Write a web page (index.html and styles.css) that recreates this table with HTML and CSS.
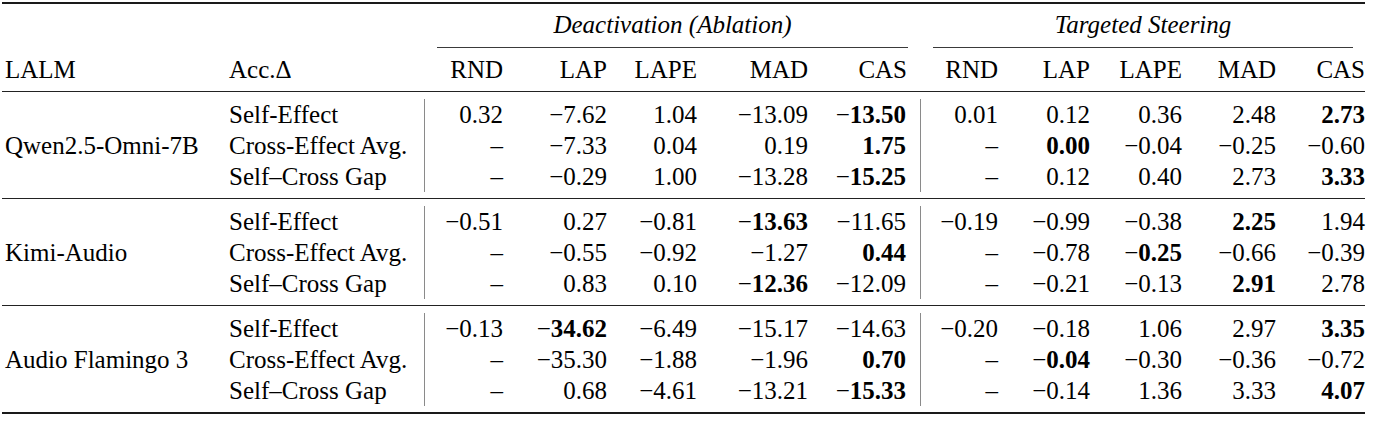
FILE: index.html
```html
<!DOCTYPE html>
<html lang="en">
<head>
<meta charset="utf-8">
<title>Results table</title>
<link rel="stylesheet" href="styles.css">
</head>
<body>
<div class="frame">
<table class="results">
  <colgroup>
    <col class="w-model"><col class="w-acc">
    <col class="w-a1"><col class="w-a2"><col class="w-a3"><col class="w-a4"><col class="w-a5">
    <col class="w-b1"><col class="w-b2"><col class="w-b3"><col class="w-b4"><col class="w-b5">
  </colgroup>
  <thead>
    <tr class="head-groups">
      <th colspan="2"></th>
      <th colspan="5"><div class="span-title span-left">Deactivation (Ablation)</div></th>
      <th colspan="5"><div class="span-title span-right">Targeted Steering</div></th>
    </tr>
    <tr class="head-cols">
      <th class="model">LALM</th>
      <th class="acc">Acc.Δ</th>
      <th>RND</th><th>LAP</th><th>LAPE</th><th>MAD</th><th class="endblock">CAS</th>
      <th>RND</th><th>LAP</th><th>LAPE</th><th>MAD</th><th>CAS</th>
    </tr>
  </thead>
  <tbody>
    <tr class="pad-top"><td colspan="12"></td></tr>
    <tr>
      <td class="model" rowspan="3">Qwen2.5-Omni-7B</td>
      <td class="acc">Self-Effect</td>
      <td>0.32</td><td>−7.62</td><td>1.04</td><td>−13.09</td><td class="endblock">−<b>13.50</b></td>
      <td>0.01</td><td>0.12</td><td>0.36</td><td>2.48</td><td><b>2.73</b></td>
    </tr>
    <tr>
      <td class="acc">Cross-Effect Avg.</td>
      <td>–</td><td>−7.33</td><td>0.04</td><td>0.19</td><td class="endblock"><b>1.75</b></td>
      <td>–</td><td><b>0.00</b></td><td>−0.04</td><td>−0.25</td><td>−0.60</td>
    </tr>
    <tr>
      <td class="acc">Self–Cross Gap</td>
      <td>–</td><td>−0.29</td><td>1.00</td><td>−13.28</td><td class="endblock">−<b>15.25</b></td>
      <td>–</td><td>0.12</td><td>0.40</td><td>2.73</td><td><b>3.33</b></td>
    </tr>
    <tr class="pad-bottom"><td colspan="12"></td></tr>
  </tbody>
  <tbody>
    <tr class="pad-top"><td colspan="12"></td></tr>
    <tr>
      <td class="model" rowspan="3">Kimi-Audio</td>
      <td class="acc">Self-Effect</td>
      <td>−0.51</td><td>0.27</td><td>−0.81</td><td>−<b>13.63</b></td><td class="endblock">−11.65</td>
      <td>−0.19</td><td>−0.99</td><td>−0.38</td><td><b>2.25</b></td><td>1.94</td>
    </tr>
    <tr>
      <td class="acc">Cross-Effect Avg.</td>
      <td>–</td><td>−0.55</td><td>−0.92</td><td>−1.27</td><td class="endblock"><b>0.44</b></td>
      <td>–</td><td>−0.78</td><td>−<b>0.25</b></td><td>−0.66</td><td>−0.39</td>
    </tr>
    <tr>
      <td class="acc">Self–Cross Gap</td>
      <td>–</td><td>0.83</td><td>0.10</td><td>−<b>12.36</b></td><td class="endblock">−12.09</td>
      <td>–</td><td>−0.21</td><td>−0.13</td><td><b>2.91</b></td><td>2.78</td>
    </tr>
    <tr class="pad-bottom"><td colspan="12"></td></tr>
  </tbody>
  <tbody>
    <tr class="pad-top"><td colspan="12"></td></tr>
    <tr>
      <td class="model" rowspan="3">Audio Flamingo 3</td>
      <td class="acc">Self-Effect</td>
      <td>−0.13</td><td>−<b>34.62</b></td><td>−6.49</td><td>−15.17</td><td class="endblock">−14.63</td>
      <td>−0.20</td><td>−0.18</td><td>1.06</td><td>2.97</td><td><b>3.35</b></td>
    </tr>
    <tr>
      <td class="acc">Cross-Effect Avg.</td>
      <td>–</td><td>−35.30</td><td>−1.88</td><td>−1.96</td><td class="endblock"><b>0.70</b></td>
      <td>–</td><td>−<b>0.04</b></td><td>−0.30</td><td>−0.36</td><td>−0.72</td>
    </tr>
    <tr>
      <td class="acc">Self–Cross Gap</td>
      <td>–</td><td>0.68</td><td>−4.61</td><td>−13.21</td><td class="endblock">−<b>15.33</b></td>
      <td>–</td><td>−0.14</td><td>1.36</td><td>3.33</td><td><b>4.07</b></td>
    </tr>
    <tr class="pad-bottom"><td colspan="12"></td></tr>
  </tbody>
</table>
</div>
</body>
</html>
```

FILE: styles.css
```css
html, body {
  margin: 0;
  padding: 0;
  background: #ffffff;
}

body {
  font-family: "Liberation Serif", "Times New Roman", Tinos, "DejaVu Serif", serif;
  font-size: 25px;
  color: #000000;
}

.frame {
  width: 1363px;
  margin: 2px 0 0 2px;
  border-top: 2px solid #1a1a1a;
  border-bottom: 2px solid #1a1a1a;
}

.results {
  width: 1363px;
  table-layout: fixed;
  border-collapse: separate;
  border-spacing: 0;
  font-family: inherit;
}

.w-model { width: 227px; }
.w-acc   { width: 196px; }
.w-a1    { width: 78px; }
.w-a2    { width: 104px; }
.w-a3    { width: 90px; }
.w-a4    { width: 111px; }
.w-a5    { width: 113px; }
.w-b1    { width: 77px; }
.w-b2    { width: 92px; }
.w-b3    { width: 92px; }
.w-b4    { width: 94px; }
.w-b5    { width: 89px; }

.results th,
.results td {
  padding: 0;
  font-weight: normal;
  line-height: 31px;
  white-space: nowrap;
  text-align: right;
}

.results b {
  font-weight: bold;
}

.results .model {
  text-align: left;
  padding-left: 3px;
  vertical-align: middle;
}

.results .acc {
  text-align: left;
}

.results .endblock {
  padding-right: 14px;
}

/* header */
.head-groups th {
  padding: 5px 0 0 0;
  vertical-align: bottom;
}

.span-title {
  font-style: italic;
  text-align: center;
  line-height: 31px;
  padding-bottom: 7px;
  border-bottom: 1px solid #3a3a3a;
}

.span-left {
  margin: 0 13px 0 12px;
}

.span-right {
  margin: 0 12px 0 12px;
}

.head-cols th {
  padding-top: 6px;
  padding-bottom: 6px;
  border-bottom: 1px solid #222222;
}

.head-cols th.endblock {
  padding-right: 14px;
}

/* body groups */
.pad-top td {
  height: 7px;
  padding: 0;
  line-height: 0;
}

tbody + tbody .pad-top td {
  border-top: 1px solid #222222;
}

.pad-bottom td {
  height: 6px;
  padding: 0;
  line-height: 0;
}

.results tbody td.acc,
.results tbody td.endblock {
  border-right: 1px solid #8a8a8a;
}
```
